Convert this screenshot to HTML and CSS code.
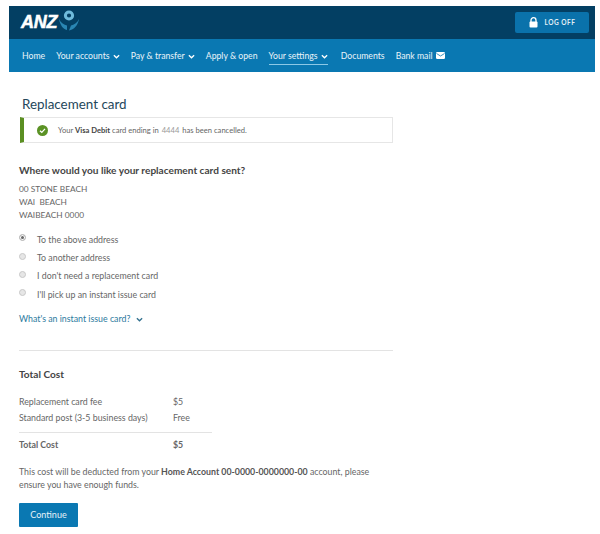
FILE: index.html
```html
<!DOCTYPE html>
<html lang="en">
<head>
    <meta charset="UTF-8">
    <meta name="viewport" content="width=device-width, initial-scale=1.0">
    <title>Replacement card</title>
    <link rel="stylesheet" href="styles.css">
</head>
<body>
    <header class="header">
        <div class="top-bar">
            <div class="logo">
                <span class="logo-text">ANZ</span>
                <svg class="logo-mark" width="20" height="21" viewBox="0 0 20 21">
                    <circle cx="10" cy="5.5" r="3.6" fill="none" stroke="#6fbbdc" stroke-width="3"/>
                    <path d="M0 9 C2 13 5 15 8 15.5 L8 20 C4 19 1 15 0 9 Z" fill="#2a86b3"/>
                    <path d="M20 9 C18 13 15 15 12 15.5 L10 20.5 C15 20 19 15 20 9 Z" fill="#2a86b3"/>
                </svg>
            </div>
            <a class="logoff" href="#">
                <svg width="9" height="11" viewBox="0 0 9 11">
                    <path d="M2 5 V3.2 a2.5 2.5 0 0 1 5 0 V5" fill="none" stroke="#fff" stroke-width="1.3"/>
                    <rect x="0.5" y="4.5" width="8" height="6" rx="1" fill="#fff"/>
                </svg>
                <span>LOG OFF</span>
            </a>
        </div>
        <nav class="nav">
            <a href="#">Home</a>
            <a href="#">Your accounts <svg class="chev" viewBox="0 0 8 5"><path d="M1 1 L4 4 L7 1"/></svg></a>
            <a href="#">Pay &amp; transfer <svg class="chev" viewBox="0 0 8 5"><path d="M1 1 L4 4 L7 1"/></svg></a>
            <a href="#">Apply &amp; open</a>
            <a class="active" href="#">Your settings <svg class="chev" viewBox="0 0 8 5"><path d="M1 1 L4 4 L7 1"/></svg></a>
            <a href="#">Documents</a>
            <a href="#">Bank mail
                <svg class="mail" width="9" height="7" viewBox="0 0 9 7">
                    <rect width="9" height="7" rx="1.2" fill="#fff"/>
                    <path d="M0.5 1.5 L4.5 4 L8.5 1.5" fill="none" stroke="#0a78b0" stroke-width="0.8"/>
                </svg>
            </a>
        </nav>
    </header>

    <main class="content">
        <h1>Replacement card</h1>
        <div class="alert">
            <svg class="tick" width="11" height="11" viewBox="0 0 11 11">
                <circle cx="5.5" cy="5.5" r="5.5" fill="#5b9225"/>
                <path d="M3 5.7 L4.8 7.4 L8 3.9" fill="none" stroke="#fff" stroke-width="1.3"/>
            </svg>
            <p>Your <b>Visa Debit</b> card ending in <span class="digits">4444</span> has been cancelled.</p>
        </div>

        <h2 class="sent-title">Where would you like your replacement card sent?</h2>
        <address class="address">00 STONE BEACH<br>WAI&nbsp; BEACH<br>WAIBEACH 0000</address>

        <div class="options">
            <label class="option"><span class="radio checked"></span>To the above address</label>
            <label class="option"><span class="radio"></span>To another address</label>
            <label class="option"><span class="radio"></span>I don't need a replacement card</label>
            <label class="option"><span class="radio"></span>I'll pick up an instant issue card</label>
        </div>
        <a class="more" href="#">What's an instant issue card? <svg class="chev" viewBox="0 0 8 5"><path d="M1 1 L4 4 L7 1"/></svg></a>

        <hr class="divider">

        <h2 class="cost-title">Total Cost</h2>
        <div class="costs">
            <div class="cost-row"><span>Replacement card fee</span><span>$5</span></div>
            <div class="cost-row"><span>Standard post (3-5 business days)</span><span>Free</span></div>
            <div class="cost-row total"><span>Total Cost</span><span>$5</span></div>
        </div>

        <p class="note">This cost will be deducted from your <b>Home Account 00-0000-0000000-00</b> account, please<br>ensure you have enough funds.</p>
        <button class="continue">Continue</button>
    </main>
</body>
</html>
```

FILE: styles.css
```css
body {
    font-family: 'Lato', sans-serif;
    font-size: 8.8px;
    color: #666;
    background-color: #fff;
    margin: 0;
    height: 534px;
    overflow: hidden;
}
a {
    text-decoration: none;
}
.header {
    margin: 6px 5px 0 9px;
}
.top-bar {
    height: 33px;
    background-color: #033f63;
    display: flex;
    justify-content: space-between;
    align-items: center;
    padding: 0 6px 0 12px;
}
.logo {
    display: flex;
    align-items: center;
    gap: 2px;
}
.logo-text {
    font-family: 'Liberation Sans', sans-serif;
    font-weight: bold;
    font-style: italic;
    font-size: 18px;
    letter-spacing: -0.2px;
    -webkit-text-stroke: 0.5px #fff;
    color: #fff;
}
.logo-mark {
    margin-top: -5px;
}
.logoff {
    width: 74px;
    height: 21px;
    background-color: #0a72ab;
    border-radius: 2px;
    display: flex;
    align-items: center;
    justify-content: center;
    gap: 7px;
    color: #e4f0f6;
    font-size: 6.5px;
    font-weight: bold;
    letter-spacing: 0.5px;
}
.nav {
    height: 33px;
    background-color: #0a78b2;
    display: flex;
    align-items: center;
    gap: 11px;
    padding: 2px 0 0 13px;
    box-sizing: border-box;
}
.nav a {
    color: #eaf4f9;
    font-size: 8.7px;
    line-height: 16px;
    border-bottom: 1px solid transparent;
}
.nav a.active {
    border-bottom-color: #8cc8e6;
    margin-right: 2px;
}
.chev {
    width: 7px;
    height: 5px;
    margin-left: 1px;
    fill: none;
    stroke: #fff;
    stroke-width: 1.5;
}
.mail {
    margin-left: 1px;
}
.content {
    padding: 0 0 0 19px;
    width: 374px;
}
h1 {
    font-size: 13.4px;
    font-weight: normal;
    color: #25475b;
    margin: 23px 0 0 3px;
    line-height: 18px;
}
.alert {
    margin: 4px 0 0 1px;
    height: 24px;
    border: 1px solid #e6e6e6;
    border-left: 4px solid #5b8f22;
    display: flex;
    align-items: center;
    padding-left: 13px;
    gap: 10px;
}
.alert p {
    margin: 0;
    font-size: 7.6px;
}
.alert b {
    color: #444;
}
.digits {
    color: #999;
    margin: 0 1px;
}
h2 {
    font-size: 10.1px;
    font-weight: bold;
    color: #444;
    margin: 0;
}
.sent-title {
    margin-top: 21px;
    line-height: 13px;
}
.address {
    font-style: normal;
    font-size: 8.3px;
    line-height: 13px;
    margin-top: 6px;
}
.options {
    margin-top: 8px;
}
.option {
    display: flex;
    align-items: center;
    height: 18.4px;
}
.radio {
    width: 5px;
    height: 5px;
    border: 1px solid #c8c8c8;
    background-color: #e6e6e6;
    border-radius: 50%;
    margin-right: 11px;
    margin-top: -3px;
}
.radio.checked {
    background-color: #666;
    box-shadow: inset 0 0 0 1px #fff;
}
.more {
    display: block;
    margin-top: 9px;
    color: #2c7a9e;
    line-height: 12px;
}
.more .chev {
    stroke: #33718f;
    margin-left: 3px;
}
.divider {
    border: 0;
    border-top: 1px solid #e3e3e3;
    margin: 25px 0 0;
}
.cost-title {
    margin-top: 17px;
    line-height: 12px;
}
.costs {
    margin-top: 14px;
    width: 193px;
}
.cost-row {
    display: grid;
    grid-template-columns: 154px 1fr;
    line-height: 16px;
}
.cost-row.total {
    border-top: 1px solid #e3e3e3;
    margin-top: 6px;
    padding-top: 4px;
    font-weight: bold;
}
.note {
    margin: 12px 0 0;
    width: 370px;
    line-height: 13px;
}
.note b {
    color: #555;
}
.continue {
    display: block;
    margin-top: 12px;
    width: 59px;
    height: 24px;
    background-color: #0a78b2;
    color: #e6f2f8;
    border: none;
    border-radius: 1px;
    font-family: 'Lato', sans-serif;
    font-size: 9px;
    padding: 0;
    cursor: pointer;
}
```
